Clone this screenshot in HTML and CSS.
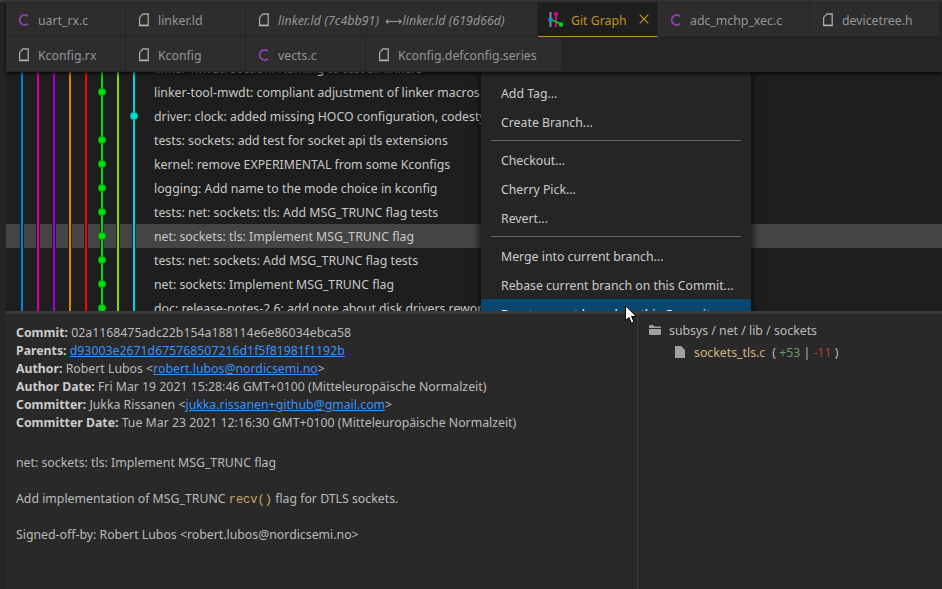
FILE: index.html
```html
<!DOCTYPE html>
<html lang="en">
<head>
  <meta charset="UTF-8" />
  <title>Git Graph</title>
  <link rel="stylesheet" href="styles.css">
</head>
<body>
  <svg class="defs" width="0" height="0">
    <symbol id="file" viewBox="0 0 12 16">
      <path d="M5 2H10.2V13.6H1.6V5.4Z" fill="#2d2d2d" stroke="#a8a8a8" stroke-width="1.3"/>
      <path d="M2 12.6H10V14H2Z" fill="#b8b8b8"/>
    </symbol>
    <symbol id="clang" viewBox="0 0 12 16">
      <path d="M9.9 4.2A5 5 0 1 0 9.9 11.8" fill="none" stroke="#8c44a8" stroke-width="1.9"/>
    </symbol>
  </svg>

  <div class="workbench">
    <div class="tabs">
      <div class="tab"><svg class="ico"><use href="#clang"/></svg>uart_rx.c</div>
      <div class="tab"><svg class="ico"><use href="#file"/></svg>linker.ld</div>
      <div class="tab tab-diff"><svg class="ico"><use href="#file"/></svg><em>linker.ld (7c4bb91) <span class="tab-arrow">⟷</span>linker.ld (619d66d)</em></div>
      <div class="tab tab-active">
        <svg class="ico-git" viewBox="0 0 16 16" width="16" height="16">
          <path d="M2.5 0V15" stroke="#7f8c93" stroke-width="2"/>
          <path d="M8 1V15" stroke="#d9008f" stroke-width="2"/>
          <path d="M2.5 7.5L13 12" stroke="#00d90a" stroke-width="1.4"/>
          <circle cx="2.5" cy="7.5" r="2.3" fill="#1c8ad0"/>
          <circle cx="8" cy="2" r="2.2" fill="#d9008f"/>
          <circle cx="13" cy="12.5" r="2.2" fill="#00d90a"/>
        </svg>
        <span class="tab-name">Git Graph</span>
        <svg class="tab-close" viewBox="0 0 10 10" width="10" height="10"><path d="M.7.7L9.3 9.3M9.3.7L.7 9.3" stroke="#c2941c" stroke-width="1.2"/></svg>
      </div>
      <div class="tab tab-adc"><svg class="ico"><use href="#clang"/></svg>adc_mchp_xec.c</div>
      <div class="tab tab-dt"><svg class="ico"><use href="#file"/></svg>devicetree.h</div>
      <div class="tab"><svg class="ico"><use href="#file"/></svg>Kconfig.rx</div>
      <div class="tab"><svg class="ico"><use href="#file"/></svg>Kconfig</div>
      <div class="tab"><svg class="ico"><use href="#clang"/></svg>vects.c</div>
      <div class="tab tab-series"><svg class="ico"><use href="#file"/></svg>Kconfig.defconfig.series</div>
    </div>

    <div class="graph">
      <div class="rows">
        <div class="row">linker-mwdt: section: Naming to test all linkers</div>
        <div class="row">linker-tool-mwdt: compliant adjustment of linker macros for section</div>
        <div class="row">driver: clock: added missing HOCO configuration, codestyle fixes</div>
        <div class="row">tests: sockets: add test for socket api tls extensions</div>
        <div class="row">kernel: remove EXPERIMENTAL from some Kconfigs</div>
        <div class="row">logging: Add name to the mode choice in kconfig</div>
        <div class="row">tests: net: sockets: tls: Add MSG_TRUNC flag tests</div>
        <div class="row row-current">net: sockets: tls: Implement MSG_TRUNC flag</div>
        <div class="row">tests: net: sockets: Add MSG_TRUNC flag tests</div>
        <div class="row">net: sockets: Implement MSG_TRUNC flag</div>
        <div class="row">doc: release-notes-2.6: add note about disk drivers rework</div>
      </div>

      <svg class="lanes" viewBox="0 0 144 239" width="144" height="239">
        <g fill="none" stroke="#1e1e1e" stroke-width="4">
          <path d="M16 0V239M32 0V239M48 0V239M64 0V239M80 0V239M96 0V239M112 0V239M128 0V239"/>
        </g>
        <g fill="none" stroke-width="2">
          <path d="M16 0V239" stroke="#0085d9"/>
          <path d="M32 0V239" stroke="#d9008f"/>
          <path d="M48 0V239" stroke="#a300d9"/>
          <path d="M64 0V239" stroke="#d98500"/>
          <path d="M80 0V239" stroke="#ff0000"/>
          <path d="M96 0V239" stroke="#00d90a"/>
          <path d="M112 0V239" stroke="#85d900"/>
          <path d="M128 0V239" stroke="#00d9cc"/>
        </g>
        <g fill="#00d90a" stroke="#1e1e1e" stroke-opacity=".35">
          <circle cx="96" cy="20" r="4"/>
          <circle cx="96" cy="68" r="4"/>
          <circle cx="96" cy="92" r="4"/>
          <circle cx="96" cy="116" r="4"/>
          <circle cx="96" cy="140" r="4"/>
          <circle cx="96" cy="164" r="4"/>
          <circle cx="96" cy="188" r="4"/>
          <circle cx="96" cy="212" r="4"/>
          <circle cx="96" cy="236" r="4"/>
          <circle cx="128" cy="44" r="4" fill="#00d9cc"/>
        </g>
      </svg>

      <div class="menu">
        <div class="menu-item">Add Tag...</div>
        <div class="menu-item">Create Branch...</div>
        <div class="menu-sep"></div>
        <div class="menu-item">Checkout...</div>
        <div class="menu-item">Cherry Pick...</div>
        <div class="menu-item">Revert...</div>
        <div class="menu-sep"></div>
        <div class="menu-item">Merge into current branch...</div>
        <div class="menu-item">Rebase current branch on this Commit...</div>
        <div class="menu-item menu-hover">Reset current branch to this Commit...</div>
      </div>
    </div>

    <div class="details">
      <div class="commit">
        <div class="meta">
          <div><b>Commit:</b> 02a1168475adc22b154a188114e6e86034ebca58</div>
          <div><b>Parents:</b> <a href="#">d93003e2671d675768507216d1f5f81981f1192b</a></div>
          <div><b>Author:</b> Robert Lubos &lt;<a href="#">robert.lubos@nordicsemi.no</a>&gt;</div>
          <div><b>Author Date:</b> Fri Mar 19 2021 15:28:46 GMT+0100 (Mitteleuropäische Normalzeit)</div>
          <div><b>Committer:</b> Jukka Rissanen &lt;<a href="#">jukka.rissanen+github@gmail.com</a>&gt;</div>
          <div><b>Committer Date:</b> Tue Mar 23 2021 12:16:30 GMT+0100 (Mitteleuropäische Normalzeit)</div>
        </div>
        <p class="subject">net: sockets: tls: Implement MSG_TRUNC flag</p>
        <p>Add implementation of MSG_TRUNC <code>recv()</code> flag for DTLS sockets.</p>
        <p class="signoff">Signed-off-by: Robert Lubos &lt;robert.lubos@nordicsemi.no&gt;</p>
      </div>
      <div class="files">
        <div class="folder">
          <svg viewBox="0 0 12 10" width="12" height="10"><path d="M0 1.2Q0 0 1.2 0H4.2L5.4 1.4H10.8Q12 1.4 12 2.6V3H0Z" fill="#a0a0a0"/><path d="M0 4H12V8.6Q12 10 10.6 10H1.4Q0 10 0 8.6Z" fill="#a0a0a0"/></svg>
          subsys / net / lib / sockets
        </div>
        <div class="file">
          <svg viewBox="0 0 10 12" width="10" height="12"><path d="M0 0H6L10 4V12H0Z" fill="#a0a0a0"/></svg>
          <span class="file-name">sockets_tls.c</span>
          <span class="file-stat">( <span class="add">+53</span> | <span class="del">-11</span> )</span>
        </div>
      </div>
    </div>
  </div>

  <svg class="cursor" viewBox="0 0 13 19" width="13" height="19">
    <path d="M.5.7V15.6L4 12.4L6.4 18.2L9 17.1L6.6 11.5H11.3Z" fill="#fff" stroke="#000" stroke-width="1"/>
  </svg>
</body>
</html>
```

FILE: styles.css
```css
* { box-sizing: border-box; }

body {
  margin: 0;
  width: 942px;
  height: 589px;
  overflow: hidden;
  position: relative;
  background: #252526;
  color: #bbb;
  font-family: "Noto Sans", sans-serif;
  font-size: 12.3px;
}
.defs { position: absolute; }

.workbench {
  display: flex;
  flex-direction: column;
  height: 100%;
  padding-left: 6px;
  border-top: 2px solid #3c3c3c;
}

/* tabs */
.tabs {
  position: relative;
  z-index: 3;
  display: flex;
  flex-wrap: wrap;
  align-content: flex-start;
  height: 70px;
  background: #252526;
  box-shadow: 0 1px 4px #000;
}
.tab {
  display: flex;
  align-items: center;
  width: 120px;
  height: 35px;
  padding: 2px 0 0 12px;
  background: #2d2d2d;
  border-right: 1px solid #252526;
  border-bottom: 1px solid #252526;
  color: #969696;
  white-space: nowrap;
}
.tab-diff { width: 292px; }
.tab-diff em { letter-spacing: .08px; }
.tab-arrow { margin-left: 3px; font-style: normal; }
.tab-adc { width: 152px; }
.tab-dt { width: 130px; }
.tab-series { width: 196px; }
.ico {
  width: 12px;
  height: 16px;
  margin-right: 8px;
  flex: none;
}
.tab-active {
  background: #1e1e1e;
  border-bottom: 1px solid #c2941c;
  color: #c2941c;
  padding-left: 10px;
}
.ico-git { margin-right: 7px; flex: none; }
.tab-close { margin-left: 12px; margin-top: -3px; }

/* graph */
.graph {
  position: relative;
  height: 239px;
  overflow: hidden;
  background: #1e1e1e;
}
.rows { margin-top: -16px; }
.row {
  height: 24px;
  line-height: 26px;
  padding-left: 148px;
  color: #c8c8c8;
  white-space: nowrap;
}
.row-current { background: #444; }
.lanes {
  position: absolute;
  left: 0;
  top: 0;
}

/* context menu */
.menu {
  position: absolute;
  left: 475px;
  top: 0;
  width: 270px;
  padding-top: 6px;
  background: #252526;
  box-shadow: 0 2px 8px #000;
  color: #ccc;
}
.menu-item {
  height: 29px;
  line-height: 31px;
  padding-left: 20px;
}
.menu-sep {
  height: 1px;
  margin: 4px 10px;
  background: #6a6a6a;
}
.menu-hover {
  background: #094771;
  color: #fff;
}

/* commit details */
.details {
  position: relative;
  z-index: 2;
  display: flex;
  flex: 1;
  background: #292929;
  border-top: 3px solid #3c3c3c;
}
.commit {
  width: 632px;
  padding: 10px 0 0 10px;
  border-right: 1px solid #3c3c3c;
}
.meta div { height: 18px; line-height: 18px; }
.meta b { color: #ccc; }
.commit a { color: #3794ff; }
.commit p {
  margin: 18px 0 0;
  line-height: 18px;
}
.commit .subject { margin-top: 22px; }
.commit .signoff { margin-top: 17px; }
.commit code {
  font-family: "Liberation Mono", monospace;
  font-size: 12px;
  color: #c9a96a;
}

.files { padding: 7px 0 0 11px; }
.folder {
  display: flex;
  align-items: center;
  gap: 8px;
  height: 18px;
}
.file {
  display: flex;
  align-items: center;
  height: 26px;
  padding-left: 26px;
  white-space: pre;
}
.file-name { margin-left: 9px; color: #d7b47b; }
.file-stat { margin-left: 7px; }
.add { color: #6a9a6a; }
.del { color: #b3402f; }

.cursor {
  position: absolute;
  left: 625px;
  top: 305px;
  z-index: 5;
}
```
